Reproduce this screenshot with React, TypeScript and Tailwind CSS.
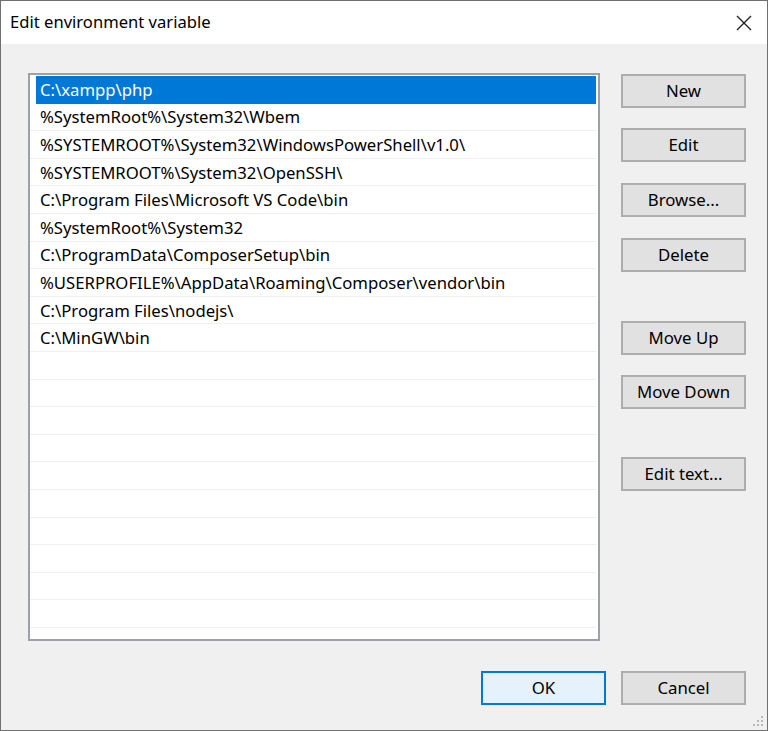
import React from 'react'

const paths = [
  'C:\\xampp\\php',
  '%SystemRoot%\\System32\\Wbem',
  '%SYSTEMROOT%\\System32\\WindowsPowerShell\\v1.0\\',
  '%SYSTEMROOT%\\System32\\OpenSSH\\',
  'C:\\Program Files\\Microsoft VS Code\\bin',
  '%SystemRoot%\\System32',
  'C:\\ProgramData\\ComposerSetup\\bin',
  '%USERPROFILE%\\AppData\\Roaming\\Composer\\vendor\\bin',
  'C:\\Program Files\\nodejs\\',
  'C:\\MinGW\\bin',
]

const TOTAL_ROWS = 20

function Btn({ label, className = '' }: { label: string; className?: string }) {
  return (
    <button
      className={`w-[125px] h-[34px] bg-[#e1e1e1] border-2 border-[#adadad] text-[16.8px] text-black flex items-center justify-center ${className}`}
    >
      {label}
    </button>
  )
}

export default function App() {
  const rows = Array.from({ length: TOTAL_ROWS }, (_, i) => paths[i] ?? '')
  return (
    <div
      className="w-[768px] h-[731px] bg-[#f0f0f0] border border-[#6f6f6f] flex flex-col overflow-hidden"
      style={{ fontFamily: '"Noto Sans", "Open Sans", sans-serif' }}
    >
      {/* title bar */}
      <div className="h-[43px] bg-white flex items-center justify-between pl-[9px] pr-[15px] shrink-0">
        <span className="text-[16.6px] text-black">Edit environment variable</span>
        <svg width="16" height="16" viewBox="0 0 16 16" className="text-[#222]">
          <path d="M1 1L15 15M15 1L1 15" stroke="currentColor" strokeWidth="1.4" fill="none" />
        </svg>
      </div>

      {/* body */}
      <div className="relative flex-1 flex flex-col pt-[29px] pl-[27px] pr-[21px]">
        <div className="flex">
          {/* list */}
          <div className="w-[572px] h-[568px] bg-white border-2 border-[#9ba1a7] pt-[1px] pr-[2px] overflow-hidden">
            {rows.map((p, i) => (
              <div key={i} className={`h-[27.6px] flex ${i === 0 ? '' : 'border-b border-[#efefef]'}`}>
                <div
                  className={`flex-1 ml-[6px] flex items-center pl-[4px] text-[16.7px] whitespace-nowrap ${
                    i === 0 ? 'bg-[#0078d7] text-white' : 'text-black'
                  }`}
                >
                  {p}
                </div>
              </div>
            ))}
          </div>

          {/* side buttons */}
          <div className="flex flex-col ml-[21px] pt-[1px]">
            <Btn label="New" />
            <Btn label="Edit" className="mt-[20px]" />
            <Btn label="Browse..." className="mt-[21px]" />
            <Btn label="Delete" className="mt-[21px]" />
            <Btn label="Move Up" className="mt-[49px]" />
            <Btn label="Move Down" className="mt-[20px]" />
            <Btn label="Edit text..." className="mt-[48px]" />
          </div>
        </div>

        {/* footer */}
        <div className="flex justify-end gap-[15px] mt-[30px]">
          <Btn label="OK" className="!bg-[#e5f1fb] !border-[#0078d7]" />
          <Btn label="Cancel" />
        </div>

        {/* resize grip */}
        <svg width="12" height="12" viewBox="0 0 12 12" className="absolute right-[3px] bottom-[3px]">
          {[[9, 1], [9, 5], [5, 5], [9, 9], [5, 9], [1, 9]].map(([x, y], i) => (
            <rect key={i} x={x} y={y} width="2" height="2" fill="#b8b8b8" />
          ))}
        </svg>
      </div>
    </div>
  )
}
